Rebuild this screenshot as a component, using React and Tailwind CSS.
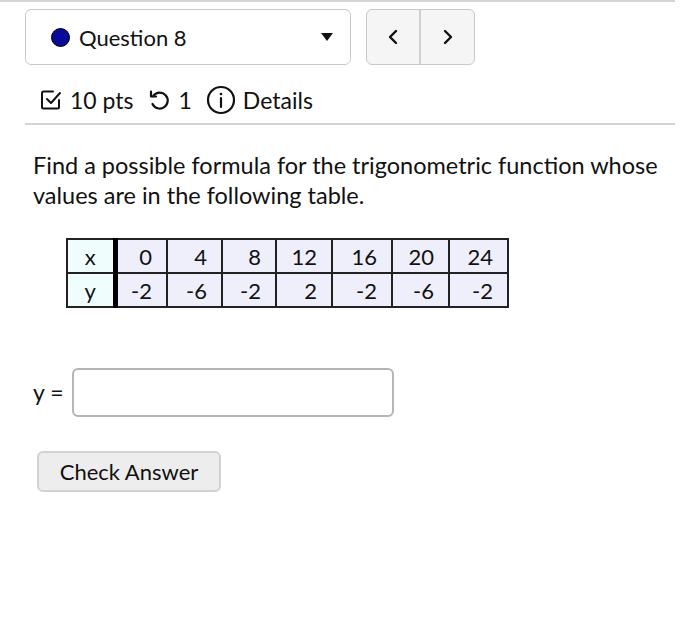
import React from 'react';

const xs = ['0', '4', '8', '12', '16', '20', '24'];
const ys = ['-2', '-6', '-2', '2', '-2', '-6', '-2'];
const widths = ['w-[52px]', 'w-[55px]', 'w-[54px]', 'w-[56px]', 'w-[60px]', 'w-[57px]', 'w-[59px]'];

const CheckBox = () => (
    <svg width="24" height="24" viewBox="0 0 24 24" fill="none" stroke="#111" strokeWidth="2" strokeLinecap="round" strokeLinejoin="round">
        <path d="M20 12v7a1.5 1.5 0 0 1-1.5 1.5h-14A1.5 1.5 0 0 1 3 19V5a1.5 1.5 0 0 1 1.5-1.5H14" />
        <path d="M8 11l4 4 9-10" />
    </svg>
);

const Retry = () => (
    <svg width="24" height="24" viewBox="0 0 24 24" fill="none" stroke="#111" strokeWidth="2.2" strokeLinecap="round" strokeLinejoin="round">
        <path d="M6.5 7.5A8 8 0 1 1 5.5 16" />
        <path d="M4 3.5v5h5" />
    </svg>
);

const Info = () => (
    <svg width="30" height="30" viewBox="0 0 30 30" fill="none" stroke="#111" strokeWidth="2.2">
        <circle cx="15" cy="15" r="13" />
        <circle cx="15" cy="9" r="1.3" fill="#111" stroke="none" />
        <path d="M15 13v9" strokeLinecap="round" />
    </svg>
);

export default function App() {
    return (
        <div className="w-[700px] h-[631px] bg-white text-[#111] font-['Lato',sans-serif] overflow-hidden">
            <div className="ml-0 mr-[25px] border-t-2 border-[#d4d4d4]" />
            <div className="px-[25px] pt-[7px]">
                <div className="flex gap-[15px]">
                    <div className="w-[326px] h-[56px] border border-[#c9c9c9] rounded-md flex items-center pl-[25px] pr-[16px]">
                        <span className="w-[19px] h-[19px] rounded-full bg-[#0a0a9a] border border-black" />
                        <span className="ml-[9px] text-[22px]">Question 8</span>
                        <svg className="ml-auto" width="14" height="10" viewBox="0 0 14 10">
                            <path d="M1 1h12L7 9z" fill="#111" />
                        </svg>
                    </div>
                    <div className="w-[109px] h-[56px] border border-[#c9c9c9] rounded-md bg-[#f5f5f5] flex">
                        <div className="w-[54px] flex items-center justify-center border-r-2 border-[#d0d0d0]">
                            <svg width="12" height="16" viewBox="0 0 12 16" fill="none" stroke="#111" strokeWidth="2.4" strokeLinecap="round" strokeLinejoin="round">
                                <path d="M9 2L3 8l6 6" />
                            </svg>
                        </div>
                        <div className="flex-1 flex items-center justify-center">
                            <svg width="12" height="16" viewBox="0 0 12 16" fill="none" stroke="#111" strokeWidth="2.4" strokeLinecap="round" strokeLinejoin="round">
                                <path d="M3 2l6 6-6 6" />
                            </svg>
                        </div>
                    </div>
                </div>
                <div className="flex items-center h-[58px] pt-[12px] pl-[14px] text-[23px]">
                    <CheckBox />
                    <span className="ml-[7px]">10 pts</span>
                    <span className="ml-[13px]"><Retry /></span>
                    <span className="ml-[8px]">1</span>
                    <span className="ml-[14px]"><Info /></span>
                    <span className="ml-[7px]">Details</span>
                </div>
                <div className="border-t-2 border-[#d4d4d4]" />
            </div>
            <div className="px-[33px] pt-[25px]">
                <p className="text-[23.5px] leading-[30px] w-[650px]">
                    Find a possible formula for the trigonometric function whose values are in the following table.
                </p>
                <table className="mt-[28px] ml-[33px] border-collapse text-[22px] leading-[29px]">
                    <tbody>
                        <tr>
                            <td className="w-[48px] h-[34px] border-2 border-[#222] border-r-[5px] border-r-black bg-[#effdfd] text-center">x</td>
                            {xs.map((v, i) => (
                                <td key={i} className={`${widths[i]} h-[34px] border-2 border-[#222] bg-[#efeffb] text-right pr-[14px]`}>{v}</td>
                            ))}
                        </tr>
                        <tr>
                            <td className="w-[48px] h-[34px] border-2 border-[#222] border-r-[5px] border-r-black bg-[#effdfd] text-center">y</td>
                            {ys.map((v, i) => (
                                <td key={i} className={`${widths[i]} h-[34px] border-2 border-[#222] bg-[#efeffb] text-right pr-[14px]`}>{v}</td>
                            ))}
                        </tr>
                    </tbody>
                </table>
                <div className="mt-[60px] flex items-center">
                    <span className="text-[23px]">y =</span>
                    <div className="ml-[8px] w-[322px] h-[49px] border-2 border-[#b5b5b5] rounded-md" />
                </div>
                <button className="mt-[34px] ml-[4px] w-[184px] h-[41px] bg-[#ededed] border-2 border-[#d2d2d2] rounded-md text-[22px] text-[#111]">
                    Check Answer
                </button>
            </div>
        </div>
    );
}
